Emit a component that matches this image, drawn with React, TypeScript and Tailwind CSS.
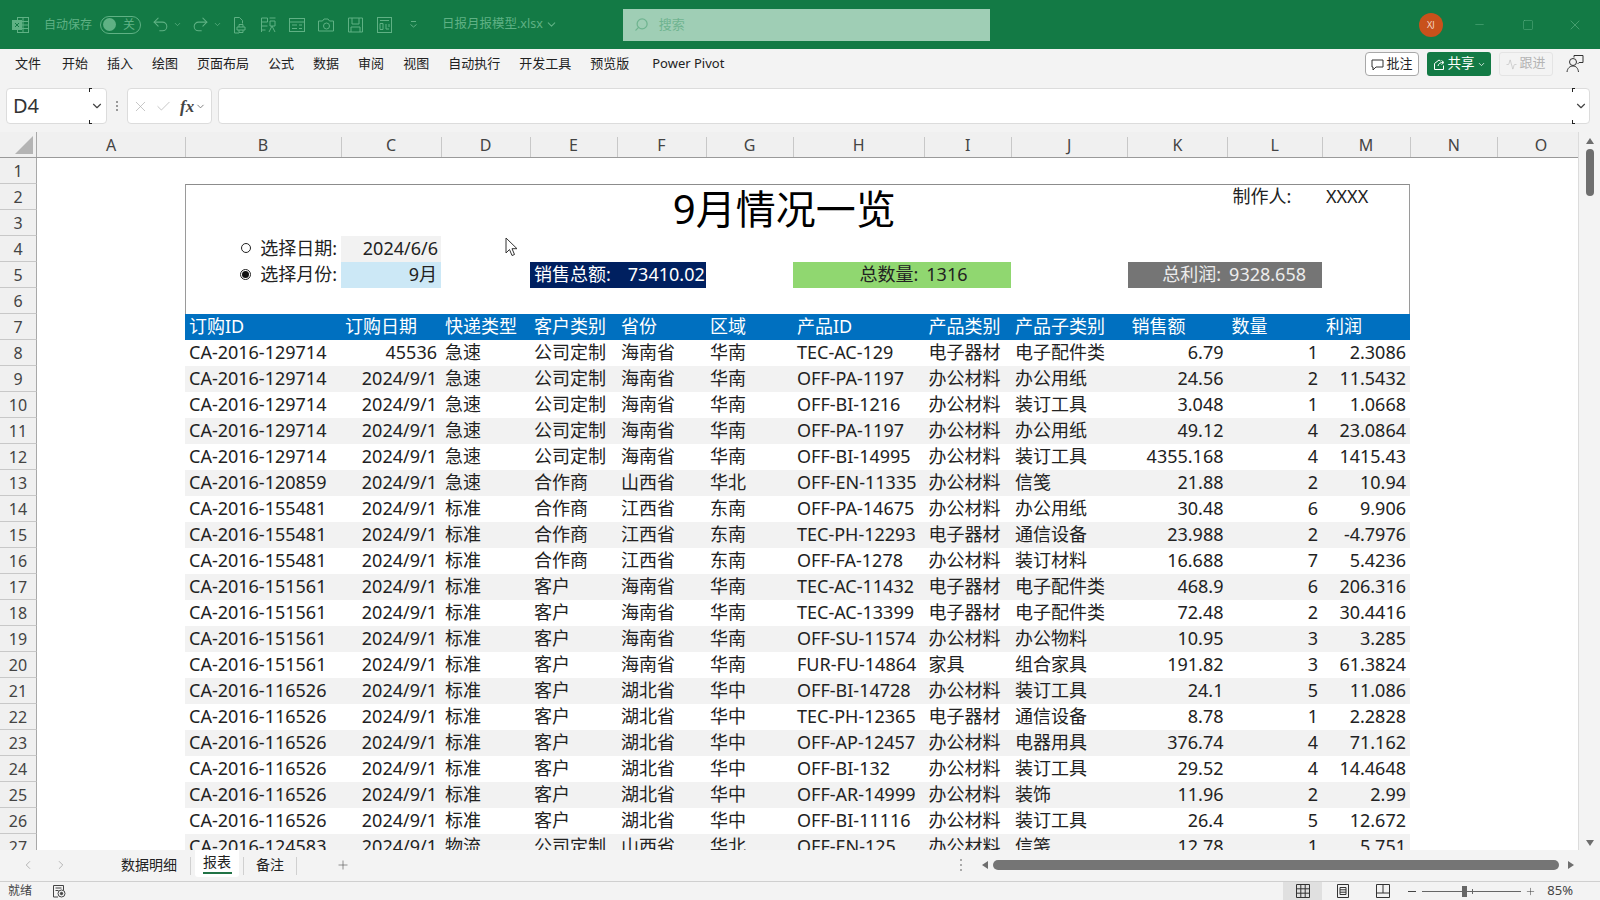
import { Undo2, Redo2, ChevronDown, ChevronLeft, ChevronRight, Search, X, Check, Minus, Plus, Square, Activity } from 'lucide-react';

const gridCols =
  'grid grid-cols-[37px_148px_156px_100px_89px_87px_89px_87px_131.5px_86.5px_116.5px_100px_94.5px_88px_87.5px_87px] auto-rows-[26px]';

const columns = [
  ['A', 'w-[148px]'],
  ['B', 'w-[156px]'],
  ['C', 'w-[100px]'],
  ['D', 'w-[89px]'],
  ['E', 'w-[87px]'],
  ['F', 'w-[89px]'],
  ['G', 'w-[87px]'],
  ['H', 'w-[131.5px]'],
  ['I', 'w-[86.5px]'],
  ['J', 'w-[116.5px]'],
  ['K', 'w-[100px]'],
  ['L', 'w-[94.5px]'],
  ['M', 'w-[88px]'],
  ['N', 'w-[87.5px]'],
  ['O', 'w-[87px]'],
];

const ribbonTabs = ['开始', '插入', '绘图', '页面布局', '公式', '数据', '审阅', '视图', '自动执行', '开发工具', '预览版'];

const tableHead = ['订购ID', '订购日期', '快递类型', '客户类别', '省份', '区域', '产品ID', '产品类别', '产品子类别', '销售额', '数量', '利润'];

// 订购ID, 日期, 快递, 客户, 省份, 区域, 产品ID, 类别, 子类别, 销售额, 数量, 利润
const rows = [
  ['CA-2016-129714', '45536', '急速', '公司定制', '海南省', '华南', 'TEC-AC-129', '电子器材', '电子配件类', '6.79', '1', '2.3086'],
  ['CA-2016-129714', '2024/9/1', '急速', '公司定制', '海南省', '华南', 'OFF-PA-1197', '办公材料', '办公用纸', '24.56', '2', '11.5432'],
  ['CA-2016-129714', '2024/9/1', '急速', '公司定制', '海南省', '华南', 'OFF-BI-1216', '办公材料', '装订工具', '3.048', '1', '1.0668'],
  ['CA-2016-129714', '2024/9/1', '急速', '公司定制', '海南省', '华南', 'OFF-PA-1197', '办公材料', '办公用纸', '49.12', '4', '23.0864'],
  ['CA-2016-129714', '2024/9/1', '急速', '公司定制', '海南省', '华南', 'OFF-BI-14995', '办公材料', '装订工具', '4355.168', '4', '1415.43'],
  ['CA-2016-120859', '2024/9/1', '急速', '合作商', '山西省', '华北', 'OFF-EN-11335', '办公材料', '信笺', '21.88', '2', '10.94'],
  ['CA-2016-155481', '2024/9/1', '标准', '合作商', '江西省', '东南', 'OFF-PA-14675', '办公材料', '办公用纸', '30.48', '6', '9.906'],
  ['CA-2016-155481', '2024/9/1', '标准', '合作商', '江西省', '东南', 'TEC-PH-12293', '电子器材', '通信设备', '23.988', '2', '-4.7976'],
  ['CA-2016-155481', '2024/9/1', '标准', '合作商', '江西省', '东南', 'OFF-FA-1278', '办公材料', '装订材料', '16.688', '7', '5.4236'],
  ['CA-2016-151561', '2024/9/1', '标准', '客户', '海南省', '华南', 'TEC-AC-11432', '电子器材', '电子配件类', '468.9', '6', '206.316'],
  ['CA-2016-151561', '2024/9/1', '标准', '客户', '海南省', '华南', 'TEC-AC-13399', '电子器材', '电子配件类', '72.48', '2', '30.4416'],
  ['CA-2016-151561', '2024/9/1', '标准', '客户', '海南省', '华南', 'OFF-SU-11574', '办公材料', '办公物料', '10.95', '3', '3.285'],
  ['CA-2016-151561', '2024/9/1', '标准', '客户', '海南省', '华南', 'FUR-FU-14864', '家具', '组合家具', '191.82', '3', '61.3824'],
  ['CA-2016-116526', '2024/9/1', '标准', '客户', '湖北省', '华中', 'OFF-BI-14728', '办公材料', '装订工具', '24.1', '5', '11.086'],
  ['CA-2016-116526', '2024/9/1', '标准', '客户', '湖北省', '华中', 'TEC-PH-12365', '电子器材', '通信设备', '8.78', '1', '2.2828'],
  ['CA-2016-116526', '2024/9/1', '标准', '客户', '湖北省', '华中', 'OFF-AP-12457', '办公材料', '电器用具', '376.74', '4', '71.162'],
  ['CA-2016-116526', '2024/9/1', '标准', '客户', '湖北省', '华中', 'OFF-BI-132', '办公材料', '装订工具', '29.52', '4', '14.4648'],
  ['CA-2016-116526', '2024/9/1', '标准', '客户', '湖北省', '华中', 'OFF-AR-14999', '办公材料', '装饰', '11.96', '2', '2.99'],
  ['CA-2016-116526', '2024/9/1', '标准', '客户', '湖北省', '华中', 'OFF-BI-11116', '办公材料', '装订工具', '26.4', '5', '12.672'],
  ['CA-2016-124583', '2024/9/1', '物流', '公司定制', '山西省', '华北', 'OFF-EN-125', '办公材料', '信笺', '12.78', '1', '5.751'],
];

const rightAligned = [1, 9, 10, 11];

const RowNum = ({ n, className = '' }: { n: number; className?: string }) => (
  <div className={`flex items-center justify-center bg-[#f0f0f0] border-r border-b border-r-[#a8a8a8] border-b-[#c8c8c8] text-[16px] text-[#444] ${className}`}>
    {n}
  </div>
);

const QatIcon = ({ children }: { children: React.ReactNode }) => (
  <svg width="17" height="18" viewBox="0 0 17 18" fill="none" stroke="#5fb184" strokeWidth="1" className="shrink-0">
    {children}
  </svg>
);

const App = () => {
  return (
    <div className="flex h-[900px] w-[1600px] flex-col overflow-hidden bg-[#f3f3f3] font-['Noto_Sans','Noto_Sans_CJK_SC',sans-serif] text-[#222]">
      {/* Title bar */}
      <div className="flex h-[49px] shrink-0 items-center bg-[#137a45] text-[#5fb184]">
        <svg width="17" height="18" viewBox="0 0 17 18" fill="none" stroke="#5fb184" className="ml-[12px] shrink-0">
          <rect x="5.5" y="1.5" width="11" height="15" />
          <path d="M5.5 5.5h11M5.5 9h11M5.5 12.5h11M11 1.5v15" />
          <rect x="0.5" y="4.5" width="9" height="9" fill="#5fb184" />
          <path d="M3 7l4 4M7 7l-4 4" stroke="#137a45" />
        </svg>
        <span className="ml-[15px] text-[12px]">自动保存</span>
        <div className="ml-[8px] flex h-[18px] w-[41px] items-center rounded-full border border-[#5fb184] pl-[2px]">
          <span className="h-[13px] w-[13px] rounded-full bg-[#5fb184]" />
          <span className="ml-[7px] text-[12px] leading-none">关</span>
        </div>
        <Undo2 size={19} strokeWidth={1.3} className="ml-[10px] shrink-0" />
        <ChevronDown size={9} className="ml-[3px] shrink-0" />
        <Redo2 size={19} strokeWidth={1.3} className="ml-[9px] shrink-0" />
        <ChevronDown size={9} className="ml-[3px] shrink-0" />
        <div className="ml-[9px] flex items-center gap-[12px]">
          <QatIcon>
            <path d="M8 17H3.5V1.5h5l3 3v3M6 11h8v3H6zM8 11V8.5h4V11M8 14v2.5h4V14" />
          </QatIcon>
          <QatIcon>
            <path d="M1.5 16V2h6v4h-6M1.5 10h6M1.5 14h4M9.5 2h6M10 5h5v5h-5zM9 16l3-6 3 6" />
          </QatIcon>
          <QatIcon>
            <rect x="0.5" y="2.5" width="15" height="13" />
            <path d="M0.5 6h15M3 9h5M3 12.5h5M10 9h3M10 12.5h3" />
          </QatIcon>
          <QatIcon>
            <path d="M0.5 5h4L6 3h4l1.5 2h4v10H0.5z" />
            <circle cx="8.5" cy="10" r="3" />
          </QatIcon>
          <QatIcon>
            <path d="M1.5 2h14v14h-14zM5 2v6h7V2M4 16v-5h9v5" />
          </QatIcon>
          <QatIcon>
            <rect x="1.5" y="1.5" width="14" height="15" />
            <path d="M4 4.5h9M4 7.5h3v6H4zM10 8v5h3M13 8v3" />
          </QatIcon>
        </div>
        <svg width="9" height="9" viewBox="0 0 9 9" fill="none" stroke="#5fb184" className="ml-[16px] shrink-0">
          <path d="M2 1.5h5M1.5 4.5L4.5 7l3-2.5" />
        </svg>
        <span className="ml-[24px] text-[12.5px]">日报月报模型.xlsx</span>
        <ChevronDown size={13} className="ml-[2px] shrink-0" />
        <div className="ml-[65px] flex h-[32px] w-[367px] items-center bg-[#9fceb5] pl-[11px] text-[13px] text-[#6fb490]">
          <Search size={15} className="-scale-x-100" />
          <span className="ml-[10px]">搜索</span>
        </div>
        <div className="ml-[429px] flex h-[24px] w-[24px] items-center justify-center rounded-full bg-[#c8511b] text-[9px] text-[#f3d9c8]">XJ</div>
        <Minus size={13} strokeWidth={1} className="ml-[30px]" />
        <Square size={12} strokeWidth={1} className="ml-[36px]" />
        <X size={16} strokeWidth={1} className="ml-[33px]" />
      </div>

      {/* Ribbon tabs */}
      <div className="flex h-[39px] shrink-0 items-center pb-[9px] pl-[15px] pr-[14px] text-[13px]">
        <div className="flex items-center gap-[19px]">
          <span className="mr-[2px]">文件</span>
          {ribbonTabs.map((t) => (
            <span key={t}>{t}</span>
          ))}
          <span className="ml-[4px]">Power Pivot</span>
        </div>
        <div className="ml-auto flex items-center">
          <div className="flex h-[24px] w-[54px] items-center justify-center gap-[2px] rounded-[4px] border border-[#a8a8a8] bg-white text-[13px] leading-[20px]">
            <svg width="13" height="13" viewBox="0 0 13 13" fill="none" stroke="#333">
              <path d="M1 2h11v7H5l-3 3V9H1z" />
            </svg>
            <span className="-mt-[2px]">批注</span>
          </div>
          <div className="ml-[8px] flex h-[24px] w-[64px] items-center justify-center gap-[2px] rounded-[3px] bg-[#137a45] text-[13.5px] text-white">
            <svg width="13" height="13" viewBox="0 0 13 13" fill="none" stroke="white">
              <path d="M1.5 5.5L6 2l1.500 1M1.5 5.5v6h9v-4M5 8c.5-2.500 2.500-3.500 5-3.500M8.500 2.500l2.500 2-2.500 2" />
            </svg>
            <span className="-mt-[2px]">共享</span>
            <ChevronDown size={9} strokeWidth={2} />
          </div>
          <div className="ml-[8px] flex h-[24px] w-[54px] items-center justify-center gap-[2px] rounded-[3px] border border-[#e4e4e4] text-[13px] text-[#b4b4b4]">
            <Activity size={11} strokeWidth={1.2} />
            <span className="-mt-[2px]">跟进</span>
          </div>
          <svg width="20" height="20" viewBox="0 0 20 20" fill="none" stroke="#333" className="ml-[12px] mr-[1px]">
            <circle cx="8" cy="8" r="3.5" />
            <path d="M2 18c.5-4 3-6 6-6s5 2 5.500 6M9 3.500V1.500h9v7h-4l-1.500 1.500" />
          </svg>
        </div>
      </div>

      {/* Formula bar */}
      <div className="flex h-[44px] shrink-0 items-start pl-[6px] pr-[10px]">
        <div className="relative flex h-[36px] w-[101px] items-center justify-between rounded-[4px] border border-[#dcdcdc] bg-white pl-[6px] pr-[2px] text-[20px] text-[#333]">
          D4
          <ChevronDown size={14} className="text-[#444]" />
          <span className="absolute right-[14px] top-[-1px] h-[4px] w-[3px] border-l border-t border-[#222]" />
          <span className="absolute bottom-[-1px] right-[14px] h-[4px] w-[3px] border-b border-l border-[#222]" />
        </div>
        <div className="mx-[8px] mt-[13px] flex h-[10px] w-[4px] flex-col items-center justify-between">
          <span className="h-[2px] w-[2px] bg-[#999]" />
          <span className="h-[2px] w-[2px] bg-[#999]" />
          <span className="h-[2px] w-[2px] bg-[#999]" />
        </div>
        <div className="flex h-[36px] w-[85px] items-center rounded-[4px] border border-[#dcdcdc] bg-white pl-[4px]">
          <X size={17} strokeWidth={1} className="text-[#b0b0b0]" />
          <Check size={17} strokeWidth={1} className="ml-[6px] text-[#b0b0b0]" />
          <span className="ml-[8px] font-['Liberation_Serif',serif] text-[17px] font-bold italic leading-none text-[#444]">fx</span>
          <ChevronDown size={11} className="ml-[1px] text-[#777]" />
        </div>
        <div className="relative ml-[6px] flex h-[36px] flex-1 items-center justify-end rounded-[4px] border border-[#dcdcdc] bg-white pr-[1px]">
          <ChevronDown size={14} className="text-[#444]" />
          <span className="absolute right-[14px] top-[-1px] h-[4px] w-[3px] border-l border-t border-[#222]" />
          <span className="absolute bottom-[-1px] right-[14px] h-[4px] w-[3px] border-b border-l border-[#222]" />
        </div>
      </div>

      {/* Sheet + vertical scrollbar */}
      <div className="flex h-[718px] shrink-0">
        <div className="relative w-[1578px] shrink-0 overflow-hidden bg-white">
          {/* Column headers */}
          <div className="flex h-[26px] border-b border-[#9a9a9a] bg-[#f0f0f0] text-[16px] text-[#444]">
            <div className="flex w-[37px] shrink-0 items-end justify-end border-r border-[#a8a8a8] pb-[3px] pr-[3px]">
              <span className="h-0 w-0 border-b-[18px] border-l-[18px] border-b-[#b4b4b4] border-l-transparent" />
            </div>
            {columns.map(([c, w]) => (
              <div key={c} className={`relative flex shrink-0 items-center justify-center ${w}`}>
                {c}
                <span className="absolute bottom-0 right-[-0.5px] top-[5px] w-px bg-[#c8c8c8]" />
              </div>
            ))}
          </div>

          {/* Rows 1-6: report heading */}
          <div className={gridCols}>
            {[1, 2, 3, 4, 5, 6].map((n) => (
              <RowNum key={n} n={n} className="col-start-1" />
            ))}
            <div className="col-start-3 col-end-15 row-start-2 row-end-7 border border-b-0 border-[#8c8c8c] border-l-[#9a9a9a] border-r-[#9a9a9a]" />
            <div className="col-start-5 col-end-12 row-start-2 row-end-4 flex items-center justify-center pb-[2px] text-[40px] leading-none text-black">
              9月情况一览
            </div>
            <div className="col-start-13 row-start-2 flex items-center pb-[2px] pl-[5px] text-[18px]">制作人:</div>
            <div className="col-start-14 row-start-2 flex items-center pb-[2px] pl-[4px] text-[18px]">XXXX</div>

            <div className="col-start-3 row-start-4 flex items-center justify-end gap-[9px] whitespace-nowrap pb-[2px] pr-[4px] text-[18px]">
              <span className="h-[10px] w-[10px] rounded-full border border-[#222] bg-white" />
              选择日期:
            </div>
            <div className="col-start-4 row-start-4 flex items-center justify-end bg-[#f2f2f2] pb-[2px] pr-[3px] text-[18px]">2024/6/6</div>
            <div className="col-start-3 row-start-5 flex items-center justify-end gap-[9px] whitespace-nowrap pb-[2px] pr-[4px] text-[18px]">
              <span className="flex h-[11px] w-[11px] items-center justify-center rounded-full border border-[#222] bg-white">
                <span className="h-[7px] w-[7px] rounded-full bg-[#111]" />
              </span>
              选择月份:
            </div>
            <div className="col-start-4 row-start-5 flex items-center justify-end bg-[#cce8f6] pb-[2px] pr-[4px] text-[18px]">9月</div>

            <div className="col-start-6 col-end-8 row-start-5 flex items-center whitespace-nowrap bg-[#002060] pb-[2px] pl-[4px] text-[18px] text-white">
              销售总额:<span className="ml-[17px]">73410.02</span>
            </div>
            <div className="col-start-9 col-end-11 row-start-5 flex items-center justify-center whitespace-nowrap bg-[#90d770] pb-[2px] pl-[23px] text-[18px] text-[#222]">
              总数量:<span className="ml-[8px]">1316</span>
            </div>
            <div className="col-start-12 col-end-14 row-start-5 flex items-center justify-end whitespace-nowrap bg-[#757575] pb-[2px] pr-[16px] text-[18px] text-[#ececec]">
              总利润:<span className="ml-[8px]">9328.658</span>
            </div>
          </div>

          {/* Rows 7-27: report table */}
          <div className={gridCols}>
            <RowNum n={7} />
            <div />
            {tableHead.map((h) => (
              <div key={h} className="flex items-center whitespace-nowrap bg-[#0070c0] pb-[2px] pl-[4px] text-[18px] text-white">
                {h}
              </div>
            ))}
            <div />
            <div />
            {rows.map((r, i) => (
              <div key={i} className="contents">
                <RowNum n={i + 8} />
                <div />
                {r.map((v, j) => (
                  <div
                    key={j}
                    className={`flex items-center whitespace-nowrap pb-[2px] text-[18px] ${i % 2 === 1 ? 'bg-[#f2f2f2]' : 'bg-white'} ${
                      rightAligned.includes(j) ? 'justify-end pr-[4px]' : 'pl-[4px]'
                    }`}
                  >
                    {v}
                  </div>
                ))}
                <div />
                <div />
              </div>
            ))}
          </div>

          {/* Mouse pointer */}
          <svg width="14" height="20" viewBox="0 0 14 20" className="absolute left-[505px] top-[105px]" fill="white" stroke="#333">
            <path d="M1 1v15l3.500-3.500 2.500 6 2.500-1-2.500-5.800h5z" />
          </svg>
        </div>

        {/* Vertical scrollbar */}
        <div className="flex w-[22px] shrink-0 flex-col items-center border-l border-[#dcdcdc] bg-[#f3f3f3]">
          <span className="mt-[6px] h-0 w-0 border-x-[4px] border-b-[6px] border-x-transparent border-b-[#6e6e6e]" />
          <span className="mt-[5px] h-[47px] w-[8px] rounded-full bg-[#6e6e6e]" />
          <span className="mb-[4px] mt-auto h-0 w-0 border-x-[4px] border-t-[6px] border-x-transparent border-t-[#6e6e6e]" />
        </div>
      </div>

      {/* Sheet tabs */}
      <div className="flex h-[32px] shrink-0 items-start border-b border-[#cfcfcf] text-[14px]">
        <ChevronLeft size={14} strokeWidth={1.2} className="ml-[21px] mt-[8px] text-[#999]" />
        <ChevronRight size={14} strokeWidth={1.2} className="ml-[19px] mt-[8px] text-[#999]" />
        <span className="ml-[53px] mt-[4px]">数据明细</span>
        <span className="ml-[13px] mt-[7px] h-[18px] w-px bg-[#d0d0d0]" />
        <div className="ml-[4px] flex h-[27px] w-[44px] flex-col items-center rounded-b-[3px] bg-white">
          <span className="mt-[2px] leading-[20px]">报表</span>
          <span className="h-[2px] w-[29px] bg-[#217346]" />
        </div>
        <span className="ml-[4px] mt-[7px] h-[18px] w-px bg-[#d0d0d0]" />
        <span className="ml-[12px] mt-[4px]">备注</span>
        <span className="ml-[12px] mt-[7px] h-[18px] w-px bg-[#d0d0d0]" />
        <Plus size={14} strokeWidth={1.1} className="ml-[39px] mt-[8px] text-[#555]" />
        <div className="ml-[609px] mt-[9px] flex h-[12px] w-[3px] flex-col items-center justify-between">
          <span className="h-[2px] w-[2px] bg-[#aaa]" />
          <span className="h-[2px] w-[2px] bg-[#aaa]" />
          <span className="h-[2px] w-[2px] bg-[#aaa]" />
        </div>
        <span className="ml-[20px] mt-[11px] h-0 w-0 border-y-[4.5px] border-r-[6px] border-y-transparent border-r-[#6e6e6e]" />
        <span className="ml-[5px] mt-[10px] h-[9.5px] w-[566px] rounded-full bg-[#757575]" />
        <span className="ml-[9px] mt-[11px] h-0 w-0 border-y-[4.5px] border-l-[6px] border-y-transparent border-l-[#6e6e6e]" />
      </div>

      {/* Status bar */}
      <div className="flex h-[18px] shrink-0 items-center text-[12px] text-[#444]">
        <span className="ml-[8px]">就绪</span>
        <svg width="14" height="14" viewBox="0 0 14 14" fill="none" stroke="#444" className="ml-[20px]">
          <path d="M6 13H1.500V1.500h10V6M3.500 4h6M3.500 6.500h3" />
          <circle cx="9.5" cy="9.5" r="3.5" />
          <circle cx="9.5" cy="9.5" r="1.2" fill="#444" />
        </svg>
        <div className="ml-auto flex h-full items-center">
          <div className="flex h-full w-[39px] items-center justify-center bg-[#e0e0e0]">
            <svg width="14" height="14" viewBox="0 0 14 14" fill="none" stroke="#333">
              <path d="M.5.5h13v13H.5zM.5 4.800h13M.5 9.200h13M4.800.5v13M9.200.5v13" />
            </svg>
          </div>
          <svg width="14" height="14" viewBox="0 0 14 14" fill="none" stroke="#333" className="ml-[14px]">
            <path d="M1.500.5h11v13h-11zM4 3.500h6v7H4zM4 5.800h6M4 8.200h6" />
          </svg>
          <svg width="14" height="14" viewBox="0 0 14 14" fill="none" stroke="#333" className="ml-[26px]">
            <path d="M.5.5h13v13H.5zM.5 9h13M7 .5V9" />
          </svg>
          <span className="ml-[18px] h-px w-[8px] bg-[#444]" />
          <div className="relative ml-[6px] h-px w-[99px] bg-[#666]">
            <span className="absolute left-[40px] top-[-5px] h-[11px] w-[5px] bg-[#666]" />
            <span className="absolute left-[50px] top-[-2px] h-[5px] w-px bg-[#666]" />
          </div>
          <Plus size={11} strokeWidth={1.2} className="ml-[4px]" />
          <span className="ml-[11px] mr-[27px] text-[13px]">85%</span>
        </div>
      </div>
    </div>
  );
};

export default App;
